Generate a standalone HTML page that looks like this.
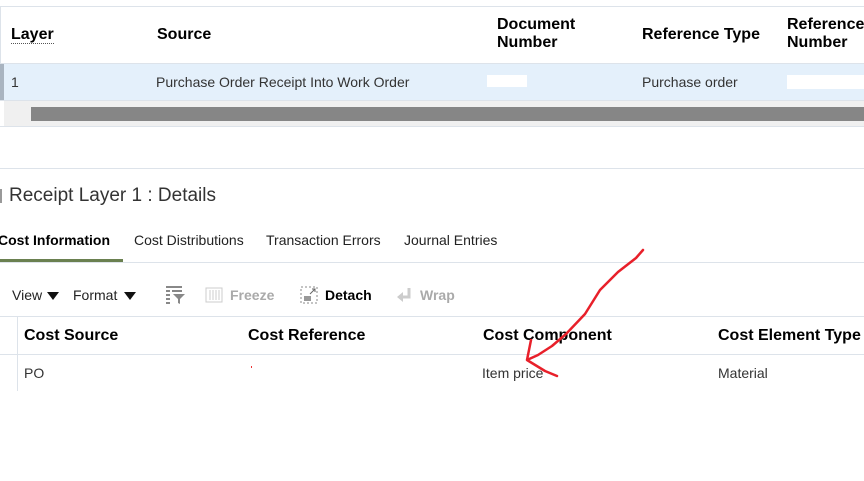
<!DOCTYPE html>
<html><head><style>
body{margin:0;width:864px;height:481px;background:#fff;position:relative;overflow:hidden;font-family:"Liberation Sans",Arial,sans-serif;color:#333}
.a{position:absolute;white-space:nowrap}
.h{font-weight:bold;color:#000;font-size:16px;font-stretch:condensed}
.l{position:absolute;background:#dde3ea}
.t{font-size:14px}
</style></head><body>
<div class="l" style="left:0;top:6px;width:864px;height:1px"></div>
<div class="l" style="left:0;top:7px;width:1px;height:93px"></div>
<div class="a h" style="left:11px;top:26px;border-bottom:1px dotted #555;line-height:17px">Layer</div>
<div class="a h" style="left:157px;top:26px">Source</div>
<div class="a h" style="left:497px;top:16px;line-height:18px">Document<br>Number</div>
<div class="a h" style="left:642px;top:26px">Reference Type</div>
<div class="a h" style="left:787px;top:16px;line-height:18px">Reference<br>Number</div>
<div class="l" style="left:0;top:63px;width:864px;height:1px"></div>
<div class="a" style="left:0;top:64px;width:864px;height:36px;background:#e4f0fb"></div>
<div class="a" style="left:0;top:64px;width:4px;height:36px;background:#a9b4c0"></div>
<div class="a t" style="left:11px;top:74px">1</div>
<div class="a t" style="left:156px;top:74px">Purchase Order Receipt Into Work Order</div>
<div class="a" style="left:487px;top:75px;width:40px;height:12px;background:#fff"></div>
<div class="a t" style="left:642px;top:74px">Purchase order</div>
<div class="a" style="left:787px;top:75px;width:77px;height:14px;background:#fff"></div>
<div class="l" style="left:0;top:100px;width:864px;height:1px"></div>
<div class="a" style="left:4px;top:101px;width:860px;height:25px;background:#f0f0f0"></div>
<div class="a" style="left:31px;top:107px;width:833px;height:14px;background:#868686"></div>
<div class="l" style="left:0;top:126px;width:864px;height:1px"></div>
<div class="l" style="left:0;top:168px;width:864px;height:1px"></div>
<div class="a" style="left:0;top:189px;width:2px;height:14px;background:#999"></div>
<div class="a" style="left:9px;top:185px;font-size:19px;color:#333">Receipt Layer 1 : Details</div>
<div class="a t" style="left:-2px;top:232px;font-weight:bold;color:#000">Cost Information</div>
<div class="a t" style="left:134px;top:232px;color:#222">Cost Distributions</div>
<div class="a t" style="left:266px;top:232px;color:#222">Transaction Errors</div>
<div class="a t" style="left:404px;top:232px;color:#222">Journal Entries</div>
<div class="l" style="left:0;top:262px;width:864px;height:1px"></div>
<div class="a" style="left:0;top:259px;width:123px;height:3px;background:#6a8050"></div>
<div class="a t" style="left:12px;top:287px;color:#222">View</div>
<svg class="a" style="left:47px;top:291px" width="12" height="9"><path d="M0 1h12L6 9z" fill="#111"/></svg>
<div class="a t" style="left:73px;top:287px;color:#222">Format</div>
<svg class="a" style="left:124px;top:291px" width="12" height="9"><path d="M0 1h12L6 9z" fill="#111"/></svg>
<svg class="a" style="left:165px;top:285px" width="22" height="20"><path d="M1 2h16M1 6h4M7 6h10M1 10h4M1 14h4M1 18h4" stroke="#888" stroke-width="2"/><path d="M8 9h12l-5 5v5l-2-1v-4z" fill="#888"/></svg>
<svg class="a" style="left:205px;top:287px" width="18" height="16"><rect x="1" y="1" width="16" height="14" fill="none" stroke="#ccc"/><path d="M5 3v10M8 3v10M11 3v10M14 3v10" stroke="#ccc"/></svg>
<div class="a t" style="left:230px;top:287px;font-weight:bold;color:#aaa">Freeze</div>
<svg class="a" style="left:300px;top:286px" width="18" height="18"><rect x="1" y="1" width="16" height="16" fill="none" stroke="#888" stroke-dasharray="2 2"/><path d="M10 8l5-5M12 3h3v3" stroke="#666" fill="none"/><rect x="4" y="10" width="7" height="5" fill="#999"/></svg>
<div class="a t" style="left:325px;top:287px;font-weight:bold;color:#000">Detach</div>
<svg class="a" style="left:396px;top:287px" width="18" height="16"><path d="M13 1v9H6" stroke="#ccc" stroke-width="3" fill="none"/><path d="M1 10l6-5v10z" fill="#ccc"/></svg>
<div class="a t" style="left:420px;top:287px;font-weight:bold;color:#aaa">Wrap</div>
<div class="l" style="left:0;top:316px;width:864px;height:1px"></div>
<div class="l" style="left:17px;top:317px;width:1px;height:74px"></div>
<div class="a h" style="left:24px;top:327px;font-stretch:normal">Cost Source</div>
<div class="a h" style="left:248px;top:327px;font-stretch:normal">Cost Reference</div>
<div class="a h" style="left:483px;top:327px;font-stretch:normal">Cost Component</div>
<div class="a h" style="left:718px;top:327px;font-stretch:normal">Cost Element Type</div>
<div class="l" style="left:0;top:354px;width:864px;height:1px"></div>
<div class="a t" style="left:24px;top:365px">PO</div>
<div class="a" style="left:251px;top:366px;width:1px;height:2px;background:#e33"></div>
<div class="a t" style="left:482px;top:365px">Item price</div>
<div class="a t" style="left:718px;top:365px">Material</div>
<svg class="a" style="left:0;top:0" width="864" height="481"><path d="M643 250L636 258L618 272L600 290L585 314L566 334L552 346L538 355L527 360M531 340L529 350L527 360L545 371L557 376" stroke="#e8202a" stroke-width="2.5" fill="none" stroke-linecap="round" stroke-linejoin="round"/></svg>
</body></html>
